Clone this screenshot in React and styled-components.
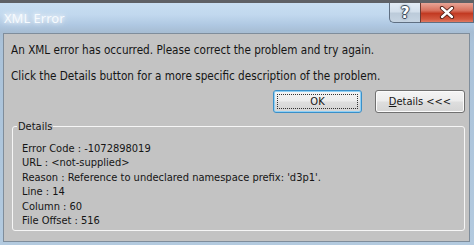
import React from 'react';
import styled, { createGlobalStyle } from 'styled-components';

const Global = createGlobalStyle`
  html, body { margin: 0; padding: 0; background: #c3c3c3; }
  body { font-family: "DejaVu Sans Condensed", "DejaVu Sans", sans-serif; }
`;

const Window = styled.div`
  width: 474px;
  height: 245px;
  box-sizing: border-box;
  display: flex;
  flex-direction: column;
  border-top: 3px solid #5e6166;
  background: linear-gradient(180deg, #c8def2 0px, #c1d8ee 12px, #afc8e2 22px, #a7bdd3 29px, #aac2d9 40px, #b3cadf 100%);
  overflow: hidden;
`;

const TitleBar = styled.div`
  height: 30px;
  flex: none;
  display: flex;
  justify-content: space-between;
  align-items: flex-start;
`;

const Title = styled.div`
  padding-left: 4px;
  line-height: 30px;
  font-family: "Noto Sans", sans-serif;
  font-size: 13px;
  color: #f6fafe;
  text-shadow: 0 0 4px #ffffff, 0 0 8px rgba(255, 255, 255, 0.9);
`;

const Controls = styled.div`
  display: flex;
`;

const CaptionButton = styled.div`
  height: 20px;
  width: ${(p) => p.$width}px;
  box-sizing: border-box;
  display: flex;
  align-items: center;
  justify-content: center;
  border: 1px solid #5f6f82;
  border-top: none;
`;

const HelpButton = styled(CaptionButton)`
  border-right: none;
  border-radius: 0 0 0 5px;
  background: linear-gradient(180deg, #e3ecf5 0%, #d3dfeb 45%, #bccbda 55%, #c6d4e2 100%);
`;

const CloseButton = styled(CaptionButton)`
  border-left: 1px solid #6d3a32;
  background: linear-gradient(180deg, #e8a597 0%, #d7705c 40%, #c23a22 55%, #d2583f 85%, #e07a62 100%);
`;

const HelpGlyph = styled.span`
  font-family: "DejaVu Sans", sans-serif;
  font-weight: bold;
  font-size: 15px;
  line-height: 16px;
  color: #ffffff;
  text-shadow: -1px 0 #3b4a5c, 1px 0 #3b4a5c, 0 -1px #3b4a5c, 0 1px #3b4a5c, 0 0 3px #3b4a5c;
`;

const Client = styled.div`
  flex: 1;
  margin: 0 4px 3px 3px;
  padding: 10px 4px 0 7px;
  background: #c3c3c3;
  border: 1px solid #7f8d9b;
  color: #151515;
  font-size: 11px;
  display: flex;
  flex-direction: column;
  align-items: stretch;
`;

const Message = styled.p`
  margin: ${(p) => (p.$gap ? '13px' : '0')} 0 0 0;
  font-size: 11.65px;
  line-height: 13px;
  white-space: nowrap;
`;

const ButtonRow = styled.div`
  display: flex;
  justify-content: flex-end;
  gap: 13px;
  margin-top: 7px;
`;

const Button = styled.div`
  width: ${(p) => p.$width}px;
  height: 23px;
  box-sizing: border-box;
  border: 1px solid ${(p) => (p.$default ? '#3a8fc8' : '#707070')};
  border-radius: 3px;
  background: linear-gradient(180deg, #f4f4f4 0%, #ececec 48%, #dedede 52%, #d4d4d4 100%);
  box-shadow: ${(p) => (p.$default ? 'inset 0 0 0 1px #8fd0f5' : 'inset 0 0 0 1px #fbfbfb')};
  display: flex;
  align-items: center;
  justify-content: center;
  padding: 3px;
  font-size: 11px;
  line-height: 13px;
`;

const FocusRing = styled.div`
  align-self: stretch;
  flex: 1;
  display: flex;
  align-items: center;
  justify-content: center;
  border: 1px dotted #333;
`;

const Group = styled.fieldset`
  margin: 7px 0 0 1px;
  padding: 0 0 2px 0;
  min-width: 0;
  border: 1px solid #f6f6f6;
  border-radius: 3px;
`;

const Legend = styled.legend`
  margin-left: 4px;
  padding: 0 1px;
  font-size: 11px;
  line-height: 13px;
`;

const DetailList = styled.div`
  padding: 9px 0 0 9px;
  line-height: 14.4px;
`;

const DetailLine = styled.div`
  white-space: nowrap;
`;

const CloseIcon = () => (
  <svg width="16" height="13" viewBox="0 0 16 13">
    <path d="M3 2 L13 11 M13 2 L3 11" stroke="#4a1a12" strokeWidth="4.2" strokeLinecap="round" fill="none" />
    <path d="M3 2 L13 11 M13 2 L3 11" stroke="#ffffff" strokeWidth="2.4" strokeLinecap="round" fill="none" />
  </svg>
);

const details = [
  'Error Code : -1072898019',
  'URL : <not-supplied>',
  "Reason : Reference to undeclared namespace prefix: 'd3p1'.",
  'Line : 14',
  'Column : 60',
  'File Offset : 516',
];

export default function App() {
  return (
    <>
      <Global />
      <Window>
        <TitleBar>
          <Title>XML Error</Title>
          <Controls>
            <HelpButton $width={31}>
              <HelpGlyph>?</HelpGlyph>
            </HelpButton>
            <CloseButton $width={54}>
              <CloseIcon />
            </CloseButton>
          </Controls>
        </TitleBar>
        <Client>
          <Message>An XML error has occurred. Please correct the problem and try again.</Message>
          <Message $gap>Click the Details button for a more specific description of the problem.</Message>
          <ButtonRow>
            <Button $default $width={89}>
              <FocusRing>OK</FocusRing>
            </Button>
            <Button $width={90}>
              <span>
                <u>D</u>etails &lt;&lt;&lt;
              </span>
            </Button>
          </ButtonRow>
          <Group>
            <Legend>Details</Legend>
            <DetailList>
              {details.map((d) => (
                <DetailLine key={d}>{d}</DetailLine>
              ))}
            </DetailList>
          </Group>
        </Client>
      </Window>
    </>
  );
}
